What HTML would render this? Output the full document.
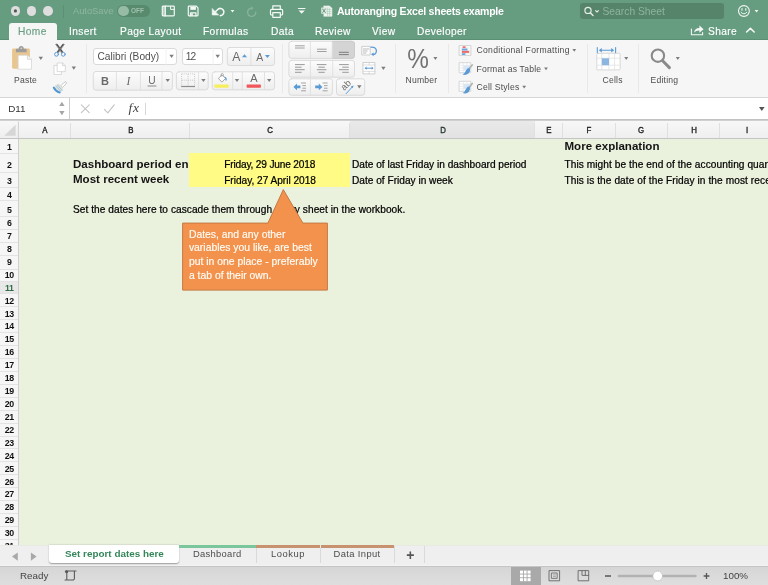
<!DOCTYPE html>
<html lang="en">
<head>
<meta charset="utf-8">
<title>Autoranging Excel sheets example</title>
<style>
*{box-sizing:border-box;margin:0;padding:0}
html,body{width:768px;height:585px;overflow:hidden;background:#eaf1dd}
body{position:relative;will-change:transform;font-family:"Liberation Sans",sans-serif;color:#222;-webkit-font-smoothing:antialiased}
.abs,.t{position:absolute;white-space:nowrap}
.t{line-height:1}
#titlebar{left:0;top:0;width:768px;height:40px;background:#669c80;border-bottom:1px solid #5b8f74}
#ribbon{left:0;top:40px;width:768px;height:57px;background:#f6f6f6}
#fbar{left:0;top:96.5px;width:768px;height:23px;background:#fff;border-top:1px solid #d6d6d6}
#fline{left:0;top:119px;width:768px;height:2px;background:linear-gradient(#bcbcbc,#d6d6d6)}
#colhdr{left:0;top:121px;width:768px;height:17.5px;background:linear-gradient(#f7f7f7,#efefef);border-bottom:1px solid #c4c4c4}
#rowhdr{left:0;top:138.5px;width:19px;height:406.5px;background:#f6f6f6;border-right:1px solid #cfcfcf}
#sheet{left:19px;top:138.5px;width:749px;height:406.5px;background:#eaf1dd}
#tabbar{left:0;top:545px;width:768px;height:21px;background:#efefef;border-top:1px solid #e8eae4;border-bottom:1px solid #f3f3f3}
#status{left:0;top:566px;width:768px;height:19px;background:linear-gradient(#d6d6d6,#dedede);border-top:1px solid #c4c4c4}
.tab{color:#fff;font-size:10.2px;letter-spacing:.38px;top:27.3px;-webkit-text-stroke:.15px #fff}
.rl{font-size:8.6px;letter-spacing:.22px;color:#4c4c4c}
.ch{font-size:8.4px;color:#222;top:126px;-webkit-text-stroke:.35px #222;transform:translateX(-50%) scaleX(.94)}
#rh{position:absolute;left:0;top:0;width:19px;height:545px;overflow:hidden}
.rh{font-size:8.8px;color:#111;left:0;width:18.5px;text-align:center;font-weight:bold;letter-spacing:-.5px}
.rs{position:absolute;left:0;width:18px;height:1px;background:#e3e3e3}
.cs{position:absolute;top:123px;width:1px;height:15px;background:#e0e0e0}
.cell{font-size:10.15px;color:#000;-webkit-text-stroke:.22px #000}
.cb{font-size:11.55px;font-weight:bold;color:#141414}
.co{font-size:10.4px;line-height:13.9px;color:#fffdf6;-webkit-text-stroke:.15px #fffdf6}
.vsep{position:absolute;width:1px;background:#e9e9e9;top:44px;height:49px}
.box{position:absolute;background:#fff;border:1px solid #dadada;border-radius:3px}
.btn{position:absolute;background:linear-gradient(#fbfbfb,#f1f1f1);border:1px solid #d6d6d6;border-radius:3px}
.bsep{position:absolute;width:1px;background:#dedede}
.dd{position:absolute;width:0;height:0;border-left:2.5px solid transparent;border-right:2.5px solid transparent;border-top:3.5px solid #777}
</style>
</head>
<body>
<!-- ===== backgrounds ===== -->
<div class="abs" id="titlebar"></div>
<div class="abs" id="ribbon"></div>
<div class="abs" id="fbar"></div>
<div class="abs" id="fline"></div>
<div class="abs" id="colhdr"></div>
<div class="abs" id="sheet"></div>
<div class="abs" id="rowhdr"></div>
<div class="abs" id="tabbar"></div>
<div class="abs" id="status"></div>

<!-- ===== title bar ===== -->
<div id="tb">
<div class="abs" style="left:10.5px;top:6px;width:9.8px;height:9.8px;border-radius:50%;background:#dedede"></div>
<svg class="abs" style="left:10px;top:5px" width="12" height="12" viewBox="0 0 12 12"><circle cx="5.4" cy="5.9" r="1.6" fill="#4f5853"/></svg>
<div class="abs" style="left:26.6px;top:6px;width:9.8px;height:9.8px;border-radius:50%;background:#dedede"></div>
<div class="abs" style="left:42.8px;top:6px;width:9.8px;height:9.8px;border-radius:50%;background:#dedede"></div>
<div class="abs" style="left:63px;top:5px;width:1px;height:13px;background:#5d8f72"></div>
<div class="t" style="left:73px;top:7px;font-size:9.3px;color:#8fb8a0">AutoSave</div>
<div class="abs" style="left:117px;top:5px;width:33px;height:12px;border-radius:6px;background:#588a6d"></div>
<div class="abs" style="left:118px;top:5.7px;width:10.6px;height:10.6px;border-radius:50%;background:#96bca5"></div>
<div class="t" style="left:131px;top:8px;font-size:6.5px;font-weight:bold;color:#a0c2af">OFF</div>
<div class="t" style="left:337px;top:6.1px;font-size:10.55px;font-weight:bold;color:#fff;letter-spacing:-.25px">Autoranging Excel sheets example</div>
<div class="abs" style="left:580px;top:3px;width:144px;height:16px;border-radius:3px;background:#56846a"></div>
<div class="t" style="left:602.5px;top:7.3px;font-size:10.3px;color:#8fb49f">Search Sheet</div>
</div>

<svg class="abs" style="left:0;top:0" width="768" height="40" viewBox="0 0 768 40" fill="none" stroke="#f4f8f5" stroke-width="1.2" stroke-linejoin="round" stroke-linecap="round">
<!-- template icon -->
<rect x="162.3" y="6.2" width="12" height="9.6" rx=".8"/><rect x="162.3" y="6.2" width="3" height="9.6" fill="#f4f8f5" fill-opacity=".55" stroke="none"/><path d="M165.3 6.2 V15.8"/><path d="M170.6 6.6 V9.4 H174" stroke-width="1"/>
<!-- save icon -->
<path d="M188.3 7 Q188.3 6.2 189.1 6.2 H196.3 L198 7.9 V15 Q198 15.8 197.2 15.8 H189.1 Q188.3 15.8 188.3 15 Z"/>
<rect x="190.3" y="6.6" width="5.6" height="3.2" fill="#f4f8f5" stroke="none"/>
<path d="M190.5 15.8 V12.9 H196 V15.8" /><rect x="191.2" y="13.4" width="1.6" height="2.4" fill="#f4f8f5" stroke="none"/>
<!-- undo -->
<path d="M212.2 8.8 V15 H218.4 Z" fill="#f4f8f5" stroke-width=".6"/><path d="M215.4 11.8 L217.5 9.7 A3.6 3.6 0 1 1 220.4 15.6" stroke-width="1.6"/>
<path d="M230.6 9.9 H234.4 L232.5 12.4 Z" fill="#f4f8f5" stroke="none"/>
<!-- redo faded -->
<g stroke="#88b39b" stroke-width="1.4"><path d="M251.8 8.2 A4.1 4.1 0 1 0 255.8 12.3"/><path d="M251.4 6.2 L253.6 8.2 L251.4 10.2" fill="#86b098" stroke="none"/></g>
<!-- print -->
<path d="M272.8 9.3 V5.8 H280.3 V9.3"/><path d="M272.6 15 H271.5 Q270.5 15 270.5 14 V10.5 Q270.5 9.4 271.6 9.4 H281.5 Q282.6 9.4 282.6 10.5 V14 Q282.6 15 281.6 15 H280.5"/><path d="M272.8 12.6 H280.3 V17.3 H272.8 Z"/>
<!-- customize -->
<path d="M298.4 8.5 H305" stroke-width="1.1"/><path d="M298.6 10.4 H304.8 L301.7 13.8 Z" fill="#f4f8f5" stroke="none"/>
<!-- excel doc icon -->
<path d="M324 5.9 H329.6 L332 8.3 V16.3 H324 Z" fill="#eef4f0" stroke="#dfe9e3" stroke-width=".6"/>
<path d="M325.5 9.5H331M325.5 11.5H331M325.5 13.5H331M327.6 8V15.6M329.6 8V15.6" stroke="#a9c9b7" stroke-width=".6"/>
<rect x="321.2" y="7.6" width="5.6" height="6.2" rx=".6" fill="#dbe8e0" stroke="none"/>
<path d="M322.7 9 L325.3 12.5 M325.3 9 L322.7 12.5" stroke="#6b9c80" stroke-width="1"/>
<!-- search -->
<circle cx="588" cy="10.4" r="3.1" stroke="#e6efe9" stroke-width="1.2"/><path d="M590.3 12.8 L593 15.6" stroke="#e6efe9" stroke-width="1.4"/>
<path d="M595.6 10.6 L597 12 L598.4 10.6" stroke="#e6efe9" stroke-width="1.1"/>
<!-- smiley -->
<circle cx="743.9" cy="11" r="5.4" stroke-width="1.1"/><path d="M741 12.3 Q743.9 15.6 746.8 12.3" stroke-width="1"/>
<path d="M742 8.6 V10.2 M745.8 8.6 V10.2" stroke-width="1.1"/>
<path d="M754.6 9.9 H758.4 L756.5 12.4 Z" fill="#f4f8f5" stroke="none"/>
<!-- share -->
<path d="M691.4 29 V34.8 H702.6 V32.5" stroke-width="1.1"/>
<path d="M694 32.6 Q694.6 28.2 699.4 28 V25.6 L703.6 29.2 L699.4 32.8 V30.4 Q696.4 30.2 694 32.6 Z" fill="#f4f8f5" stroke="none"/>
<!-- chevron -->
<path d="M746.6 32 L750.4 28.4 L754.2 32" stroke-width="1.6"/>
</svg>
<!-- ===== ribbon tabs ===== -->
<div class="abs" style="left:8.7px;top:22.6px;width:48px;height:18px;background:#f6f6f6;border-radius:3px 3px 0 0"></div>
<div class="t tab" style="left:18px;color:#6a9e80;-webkit-text-stroke:.15px #6a9e80">Home</div>
<div class="t tab" style="left:69px">Insert</div>
<div class="t tab" style="left:120px">Page Layout</div>
<div class="t tab" style="left:203px">Formulas</div>
<div class="t tab" style="left:271px">Data</div>
<div class="t tab" style="left:315px">Review</div>
<div class="t tab" style="left:372px">View</div>
<div class="t tab" style="left:417px">Developer</div>
<div class="t tab" style="left:708px">Share</div>

<!-- ===== ribbon ===== -->
<div id="rb">
<div class="t rl" style="left:14px;top:75.5px">Paste</div>
<div class="vsep" style="left:86px"></div>
<div class="box" style="left:93px;top:47.5px;width:84px;height:17.5px"></div>
<div class="t" style="left:97.5px;top:51.6px;font-size:10.2px;color:#505050">Calibri (Body)</div>
<div class="box" style="left:181.5px;top:47.5px;width:41.5px;height:17.5px"></div>
<div class="t" style="left:185.8px;top:51.6px;font-size:10.2px;letter-spacing:-1px;color:#505050">12</div>
<div class="vsep" style="left:281.5px"></div>
<div class="vsep" style="left:395px"></div>
<div class="t" style="left:405.8px;top:45.6px;font-size:27px;color:#727272;transform:scaleX(.9);transform-origin:50% 50%">%</div>
<div class="t rl" style="left:405.5px;top:75.5px">Number</div>
<div class="vsep" style="left:447.5px"></div>
<div class="t rl" style="left:476.5px;top:46.4px;letter-spacing:.31px">Conditional Formatting</div>
<div class="t rl" style="left:476.5px;top:65px">Format as Table</div>
<div class="t rl" style="left:476.5px;top:82.8px">Cell Styles</div>
<div class="vsep" style="left:586.5px"></div>
<div class="t rl" style="left:602.5px;top:75.5px">Cells</div>
<div class="vsep" style="left:637.5px"></div>
<div class="t rl" style="left:650.5px;top:75.5px">Editing</div>
</div>

<svg class="abs" style="left:0;top:40px" width="768" height="81" viewBox="0 40 768 81" fill="none" stroke-linejoin="round" stroke-linecap="round" font-family="Liberation Sans, sans-serif">
<defs>
<linearGradient id="bg" x1="0" y1="0" x2="0" y2="1"><stop offset="0" stop-color="#fcfcfc"/><stop offset="1" stop-color="#eeeeee"/></linearGradient>
</defs>
<g>
<rect x="12.1" y="48.4" width="17.8" height="20.3" rx="1.4" fill="#e8c690"/>
<path d="M15.9 52.2 V49.6 Q15.9 48.8 16.7 48.8 H18.6 Q18.8 46 21.2 46 Q23.6 46 23.8 48.8 H25.8 Q26.6 48.8 26.6 49.6 V52.2 Z" fill="#9c9c9c"/>
<circle cx="21.2" cy="48.2" r=".8" fill="#e8e0c8"/>
<path d="M18.3 55.2 H27.4 L31.5 59.3 V69.2 H18.3 Z" fill="#fff" stroke="#d2d2d2" stroke-width=".7"/>
<path d="M27.4 55.2 V59.3 H31.5" fill="#f0f0f0" stroke="#cfcfcf" stroke-width=".7"/>
</g>
<path d="M38.6 56.8 h4.4 l-2.2 3.2 z" fill="#7d7d7d" stroke="none"/>
<g>
<path d="M56 44.2 L57.2 44 L63 52 L62 52.8 Z M64 44.2 L62.8 44 L57 52 L58 52.8 Z" fill="#4a4a4a" stroke="#4a4a4a" stroke-width=".5"/>
<circle cx="56.5" cy="54.3" r="1.9" stroke="#5b9bd5" stroke-width="1"/>
<circle cx="63.3" cy="54.3" r="1.9" stroke="#5b9bd5" stroke-width="1"/>
</g>
<g stroke="#cdcdcd" stroke-width=".7" fill="#fff">
<path d="M54.3 65.4 H61.4 V74.5 H54.3 Z"/>
<path d="M57.5 63 H62.6 L65.3 65.7 V71.6 H57.5 Z"/>
<path d="M62.6 63 V65.7 H65.3" fill="#f1f1f1"/>
</g>
<path d="M71.6 66.5 h4.4 l-2.2 3.2 z" fill="#7d7d7d" stroke="none"/>
<g>
<path d="M61 85.6 L64.4 82.2 Q65.4 81.3 66.1 82.1 Q66.8 83 65.9 83.9 L62.6 87.4 Z" fill="#fff" stroke="#b2b2b2" stroke-width=".7"/>
<path d="M53.6 87.4 L58.8 83.6 L63.4 89.2 L59.8 92.8 Q55.4 91.6 53.6 87.4 Z" fill="#dfe3d8"/>
<path d="M57.4 84.8 L62.2 90.6 M56 85.8 L60.8 91.6" stroke="#9fc3e6" stroke-width=".9"/>
<path d="M53.7 87.5 Q55.6 91.4 59.8 92.6" stroke="#4f93d2" stroke-width="1.8"/>
</g>
<path d="M169.4 54.7 h4.4 l-2.2 3.2 z" fill="#7d7d7d" stroke="none"/>
<path d="M215.5 54.7 h4.4 l-2.2 3.2 z" fill="#7d7d7d" stroke="none"/>
<path d="M166 48.5V64.5M213 48.5V64.5" stroke="#efefef" stroke-width=".8"/>
<rect x="227.3" y="47.5" width="47.2" height="18.0" rx="2.6" fill="url(#bg)" stroke="#d4d4d4" stroke-width=".8"/><path d="M250.9 48.0V65.0" stroke="#dcdcdc" stroke-width=".8"/>
<text x="236.3" y="60.9" font-size="12.2" fill="#6a6a6a" text-anchor="middle">A</text>
<path d="M242 57.3 h5 l-2.5 -3 z" fill="#5b9bd5"/>
<text x="259.8" y="60.6" font-size="10.4" fill="#6a6a6a" text-anchor="middle">A</text>
<path d="M264.9 55 h5 l-2.5 3 z" fill="#5b9bd5"/>
<rect x="93.3" y="71.5" width="79.1" height="18.7" rx="2.6" fill="url(#bg)" stroke="#d4d4d4" stroke-width=".8"/><path d="M116.4 72.0V89.7" stroke="#dcdcdc" stroke-width=".8"/><path d="M140.4 72.0V89.7" stroke="#dcdcdc" stroke-width=".8"/><path d="M162.0 72.0V89.7" stroke="#dcdcdc" stroke-width=".8"/>
<text x="105" y="85" font-size="11" font-weight="bold" fill="#6a6a6a" text-anchor="middle">B</text>
<text x="128.4" y="85" font-size="11.5" font-style="italic" font-family="Liberation Serif, serif" fill="#6a6a6a" text-anchor="middle">I</text>
<text x="151.9" y="84.2" font-size="10.2" fill="#6a6a6a" text-anchor="middle">U</text>
<path d="M148 86H156" stroke="#8a8a8a" stroke-width="1"/>
<path d="M165.5 78.9 h4.4 l-2.2 3.2 z" fill="#7d7d7d" stroke="none"/>
<rect x="176.4" y="71.8" width="31.8" height="18.0" rx="2.6" fill="url(#bg)" stroke="#d4d4d4" stroke-width=".8"/><path d="M198.6 72.3V89.3" stroke="#dcdcdc" stroke-width=".8"/>
<path d="M181.6 73.9H194.6M181.6 80.2H194.6M181.6 73.9V86M188.1 73.9V86M194.6 73.9V86" stroke="#b5b5b5" stroke-width=".7" stroke-dasharray="1 1.1" stroke-linecap="butt"/>
<path d="M181.2 86.5H195" stroke="#8c8c8c" stroke-width="1.2" stroke-linecap="butt"/>
<path d="M201.2 78.9 h4.4 l-2.2 3.2 z" fill="#7d7d7d" stroke="none"/>
<rect x="212.2" y="71.8" width="62.3" height="18.0" rx="2.6" fill="url(#bg)" stroke="#d4d4d4" stroke-width=".8"/><path d="M232.7 72.3V89.3" stroke="#dcdcdc" stroke-width=".8"/><path d="M242.3 72.3V89.3" stroke="#dcdcdc" stroke-width=".8"/><path d="M264.5 72.3V89.3" stroke="#dcdcdc" stroke-width=".8"/>
<g>
<path d="M218.6 78.2 L222 74.8 L225.6 78.4 L222.2 81.8 Z" fill="#fff" stroke="#8e8e8e" stroke-width=".8"/>
<path d="M221 76.4 Q220.4 73.4 222.4 73.2 Q223.8 73.6 223.2 76" stroke="#8e8e8e" stroke-width=".7"/>
<path d="M224.4 76.4 Q226.8 76.8 226.8 79.6 Q226.6 80.8 225.9 80.8 Q225.2 80.6 225.4 79 Z" fill="#5b9bd5"/>
</g>
<rect x="214.4" y="84.4" width="14.3" height="3.3" rx=".6" fill="#f6ee5c"/>
<path d="M234.8 78.9 h4.4 l-2.2 3.2 z" fill="#7d7d7d" stroke="none"/>
<text x="253.8" y="82.4" font-size="11" fill="#6a6a6a" text-anchor="middle">A</text>
<rect x="246.6" y="84.4" width="14.3" height="3.3" rx=".6" fill="#f0565b"/>
<path d="M267.0 78.9 h4.4 l-2.2 3.2 z" fill="#7d7d7d" stroke="none"/>
<rect x="288.9" y="41.3" width="65.6" height="17.1" rx="2.6" fill="url(#bg)" stroke="#d4d4d4" stroke-width=".8"/><path d="M332.7 41.3 H351.9 Q354.5 41.3 354.5 43.9 V55.8 Q354.5 58.4 351.9 58.4 H332.7 Z" fill="#d4d4d4" stroke="#c2c2c2" stroke-width=".6"/><path d="M310.4 41.8V57.9" stroke="#dcdcdc" stroke-width=".8"/><path d="M332.7 41.8V57.9" stroke="#dcdcdc" stroke-width=".8"/>
<path d="M295 45.8H304.7M295 48H304.7M317 49.2H326.6M317 51.5H326.6" stroke="#a0a0a0" stroke-width="1" stroke-linecap="butt"/>
<path d="M338.9 52.3H348.8M338.9 54.6H348.8" stroke="#7e7e7e" stroke-width="1" stroke-linecap="butt"/>
<rect x="288.9" y="60.4" width="65.6" height="16.8" rx="2.6" fill="url(#bg)" stroke="#d4d4d4" stroke-width=".8"/><path d="M310.4 60.9V76.7" stroke="#dcdcdc" stroke-width=".8"/><path d="M332.7 60.9V76.7" stroke="#dcdcdc" stroke-width=".8"/>
<path d="M295 64.6H304.7M295 67.2H301.6M295 69.7H304.7M295 72.3H301.6" stroke="#9a9a9a" stroke-width="1" stroke-linecap="butt"/>
<path d="M316.8 64.6H326.4M318.4 67.2H324.8M316.8 69.7H326.4M318.4 72.3H324.8" stroke="#9a9a9a" stroke-width="1" stroke-linecap="butt"/>
<path d="M339.1 64.6H348.8M342.2 67.2H348.8M339.1 69.7H348.8M342.2 72.3H348.8" stroke="#9a9a9a" stroke-width="1" stroke-linecap="butt"/>
<rect x="288.9" y="78.8" width="43.5" height="16.5" rx="2.6" fill="url(#bg)" stroke="#d4d4d4" stroke-width=".8"/><path d="M310.4 79.3V94.8" stroke="#dcdcdc" stroke-width=".8"/>
<path d="M293.4 86.9 L297 83.6 V85.6 H300.4 V88.2 H297 V90.2 Z" fill="#5b9bd5"/>
<path d="M301 83H306M302.4 85.6H306M302.4 88.2H306M301 90.8H306" stroke="#9a9a9a" stroke-width=".9" stroke-linecap="butt"/>
<path d="M322.4 86.9 L318.8 83.6 V85.6 H315.2 V88.2 H318.8 V90.2 Z" fill="#5b9bd5"/>
<path d="M322.6 83H327.6M324 85.6H327.6M324 88.2H327.6M322.6 90.8H327.6" stroke="#9a9a9a" stroke-width=".9" stroke-linecap="butt"/>
<rect x="336.5" y="78.8" width="28.2" height="16.5" rx="2.6" fill="url(#bg)" stroke="#d4d4d4" stroke-width=".8"/>
<text x="0" y="0" font-size="9.4" fill="#6a6a6a" text-anchor="middle" transform="translate(347.9 87.2) rotate(-45)">ab</text>
<path d="M346.2 93.6 L352.6 86.6" stroke="#5b9bd5" stroke-width="1"/><path d="M353.6 85.4 L350.8 86.4 L352.6 88.2 Z" fill="#5b9bd5"/>
<path d="M357.1 85.3 h4.4 l-2.2 3.2 z" fill="#7d7d7d" stroke="none"/>
<g><rect x="362.2" y="46.4" width="8" height="8.6" fill="#fff" stroke="#bdbdbd" stroke-width=".7"/>
<path d="M363.4 49H368.8M363.4 51H367.2M363.4 53H366" stroke="#a8a8a8" stroke-width=".8"/>
<path d="M371 47.2 Q376.4 47 376.4 51 Q376.2 54.6 372.6 54.4" stroke="#5b9bd5" stroke-width="1.3"/>
<path d="M371 54.3 L373.6 52.4 V56.2 Z" fill="#5b9bd5"/></g>
<g><rect x="363.3" y="62.5" width="11.6" height="11.4" fill="#fff" stroke="#bdbdbd" stroke-width=".7"/>
<path d="M363.3 65H374.9M363.3 71.4H374.9M369.1 62.5V65M369.1 71.4V73.9" stroke="#c9c9c9" stroke-width=".6"/>
<path d="M365.6 68.2H372.6" stroke="#5b9bd5" stroke-width="1"/>
<path d="M364.6 68.2 L366.6 66.6 V69.8 Z M373.6 68.2 L371.6 66.6 V69.8 Z" fill="#5b9bd5"/></g>
<path d="M381.2 66.8 h4.4 l-2.2 3.2 z" fill="#7d7d7d" stroke="none"/>
<path d="M433.4 57.1 h4.0 l-2.0 3.0 z" fill="#7d7d7d" stroke="none"/>
<g><rect x="459.5" y="45.6" width="11.4" height="9.8" fill="#fff" stroke="#c4c4c4" stroke-width=".7"/>
<path d="M459.5 48.1H470.9M459.5 50.5H470.9M459.5 53H470.9M467 45.6V55.4" stroke="#dedede" stroke-width=".5"/>
<rect x="462.6" y="46.3" width="3" height="1.7" fill="#ef6b6b"/><rect x="461.8" y="48.5" width="5.6" height="2" fill="#6ea6dc"/>
<rect x="461.8" y="50.9" width="7.4" height="2" fill="#ef6b6b"/><rect x="461.8" y="53.2" width="3.6" height="1.8" fill="#6ea6dc"/></g>
<g transform="translate(0 62.7)"><rect x="459.5" y="0" width="11.2" height="10" fill="#fff" stroke="#c9c9c9" stroke-width=".7"/>
<path d="M459.5 2.6H470.7M459.5 5.1H470.7M459.5 7.6H470.7M463.2 0V10M467 0V10" stroke="#dcdcdc" stroke-width=".5"/>
<rect x="463.4" y="2.8" width="7" height="4.6" fill="#d6e6f6"/>
<path d="M472.2 2.2 L469 6.4" stroke="#b3b3b3" stroke-width="1.7"/>
<path d="M469.6 5 Q466.6 5.4 465.8 8 Q465 10.6 462.4 11.8 Q466.8 13 469 10.4 Q470.8 7.8 469.6 5 Z" fill="#5b9bd5"/></g>
<g transform="translate(0 81.3)"><rect x="459.5" y="0" width="11.2" height="10" fill="#fff" stroke="#c9c9c9" stroke-width=".7"/>
<path d="M459.5 2.6H470.7M459.5 5.1H470.7M459.5 7.6H470.7M463.2 0V10M467 0V10" stroke="#dcdcdc" stroke-width=".5"/>
<rect x="463.4" y="2.8" width="7" height="4.6" fill="#d6e6f6"/>
<path d="M472.2 2.2 L469 6.4" stroke="#b3b3b3" stroke-width="1.7"/>
<path d="M469.6 5 Q466.6 5.4 465.8 8 Q465 10.6 462.4 11.8 Q466.8 13 469 10.4 Q470.8 7.8 469.6 5 Z" fill="#5b9bd5"/></g>
<path d="M572.4 48.9 h3.8 l-1.9 2.8 z" fill="#7d7d7d" stroke="none"/>
<path d="M544.1 67.4 h3.8 l-1.9 2.8 z" fill="#7d7d7d" stroke="none"/>
<path d="M522.3 85.8 h3.8 l-1.9 2.8 z" fill="#7d7d7d" stroke="none"/>
<g><rect x="596.8" y="53.3" width="23.3" height="16.6" rx=".8" fill="#fff" stroke="#cfcfcf" stroke-width=".8"/>
<path d="M596.8 58.2H620.1M596.8 65.2H620.1M601.8 53.3V69.9M609 53.3V69.9M614.6 53.3V69.9" stroke="#dedede" stroke-width=".7"/>
<rect x="601.8" y="58.3" width="7.2" height="6.9" fill="#8cb5e2"/>
<path d="M597.3 47.6V52.6M615.6 47.6V52.6" stroke="#5b9bd5" stroke-width="1.1"/>
<path d="M600.6 50.2H612.4" stroke="#5b9bd5" stroke-width="1.1"/>
<path d="M598.8 50.2 L601.8 48 V52.4 Z M614.2 50.2 L611.2 48 V52.4 Z" fill="#5b9bd5"/></g>
<path d="M624.2 56.9 h4.0 l-2.0 3.0 z" fill="#7d7d7d" stroke="none"/>
<circle cx="657.9" cy="55.7" r="6.2" stroke="#8a8a8a" stroke-width="2.1"/><path d="M662.6 60.8 L669.4 67.6" stroke="#8a8a8a" stroke-width="3" />
<path d="M675.8 56.9 h4.0 l-2.0 3.0 z" fill="#7d7d7d" stroke="none"/>
<path d="M59.2 106 h5.4 l-2.7 -4.2 z M59.2 111.1 h5.4 l-2.7 4.2 z" fill="#a6a6a6"/>
<path d="M81.4 104.8 L89.2 112.6 M89.2 104.8 L81.4 112.6" stroke="#c6c6c6" stroke-width="1.2"/>
<path d="M104.4 109.4 L107.8 112.8 L114.2 104.8" stroke="#c6c6c6" stroke-width="1.2"/>
<path d="M759 107 h5.6 l-2.8 4 z" fill="#555" stroke="none"/>
</svg>

<!-- ===== formula bar ===== -->
<div class="t" style="left:8.2px;top:103.5px;font-size:9.9px;color:#333">D11</div>
<div class="abs" style="left:68.6px;top:98px;width:1px;height:21px;background:#cdcdcd"></div>
<div class="abs" style="left:145.4px;top:103px;width:1px;height:12px;background:#d6d6d6"></div>
<div class="t" style="left:128.6px;top:100.7px;font-size:13.5px;letter-spacing:.7px;font-style:italic;font-family:'Liberation Serif',serif;color:#444">fx</div>

<!-- ===== column headers ===== -->
<div class="abs" style="left:349.5px;top:121px;width:185px;height:17px;background:linear-gradient(#e9e9e9,#e2e2e2)"></div>
<svg class="abs" style="left:0;top:121px" width="20" height="18" viewBox="0 121 20 18"><path d="M15.6 124.8 V135.7 H4.2 Z" fill="#d6d6d6"/><path d="M18.4 121.5V138" stroke="#cfcfcf" stroke-width="1"/></svg>
<div id="ch">
<div class="cs" style="left:69.9px"></div><div class="cs" style="left:188.5px"></div><div class="cs" style="left:349.1px"></div><div class="cs" style="left:533.7px"></div><div class="cs" style="left:562.3px"></div><div class="cs" style="left:614.5px"></div><div class="cs" style="left:667.0px"></div><div class="cs" style="left:719.3px"></div>
<div class="t ch" style="left:45.0px">A</div>
<div class="t ch" style="left:130.5px">B</div>
<div class="t ch" style="left:270.0px">C</div>
<div class="t ch" style="left:442.5px;color:#2f5f44">D</div>
<div class="t ch" style="left:548.5px">E</div>
<div class="t ch" style="left:588.8px">F</div>
<div class="t ch" style="left:641.1px">G</div>
<div class="t ch" style="left:694.1px">H</div>
<div class="t ch" style="left:746.8px">I</div>
</div>

<!-- ===== row headers ===== -->
<div id="rh">
<div class="abs" style="left:0;top:281px;width:18px;height:13px;background:#e8e8e8"></div>
<div class="rs" style="top:152.7px"></div><div class="t rh" style="top:143.0px">1</div>
<div class="rs" style="top:171.9px"></div><div class="t rh" style="top:160.9px">2</div>
<div class="rs" style="top:186.8px"></div><div class="t rh" style="top:177.3px">3</div>
<div class="rs" style="top:199.9px"></div><div class="t rh" style="top:190.9px">4</div>
<div class="rs" style="top:215.8px"></div><div class="t rh" style="top:205.8px">5</div>
<div class="rs" style="top:228.8px"></div><div class="t rh" style="top:219.1px">6</div>
<div class="rs" style="top:241.7px"></div><div class="t rh" style="top:232.4px">7</div>
<div class="rs" style="top:254.6px"></div><div class="t rh" style="top:245.3px">8</div>
<div class="rs" style="top:268.9px"></div><div class="t rh" style="top:257.8px">9</div>
<div class="rs" style="top:280.5px"></div><div class="t rh" style="top:270.8px">10</div>
<div class="rs" style="top:293.4px"></div><div class="t rh" style="top:283.7px;color:#2f6b47">11</div>
<div class="rs" style="top:306.3px"></div><div class="t rh" style="top:296.6px">12</div>
<div class="rs" style="top:319.2px"></div><div class="t rh" style="top:309.5px">13</div>
<div class="rs" style="top:332.2px"></div><div class="t rh" style="top:322.4px">14</div>
<div class="rs" style="top:345.1px"></div><div class="t rh" style="top:335.4px">15</div>
<div class="rs" style="top:358.0px"></div><div class="t rh" style="top:348.3px">16</div>
<div class="rs" style="top:370.9px"></div><div class="t rh" style="top:361.2px">17</div>
<div class="rs" style="top:383.8px"></div><div class="t rh" style="top:374.1px">18</div>
<div class="rs" style="top:396.8px"></div><div class="t rh" style="top:387.0px">19</div>
<div class="rs" style="top:409.7px"></div><div class="t rh" style="top:400.0px">20</div>
<div class="rs" style="top:422.6px"></div><div class="t rh" style="top:412.9px">21</div>
<div class="rs" style="top:435.5px"></div><div class="t rh" style="top:425.8px">22</div>
<div class="rs" style="top:448.4px"></div><div class="t rh" style="top:438.7px">23</div>
<div class="rs" style="top:461.4px"></div><div class="t rh" style="top:451.6px">24</div>
<div class="rs" style="top:474.3px"></div><div class="t rh" style="top:464.6px">25</div>
<div class="rs" style="top:487.2px"></div><div class="t rh" style="top:477.5px">26</div>
<div class="rs" style="top:500.1px"></div><div class="t rh" style="top:490.4px">27</div>
<div class="rs" style="top:513.0px"></div><div class="t rh" style="top:503.3px">28</div>
<div class="rs" style="top:526.0px"></div><div class="t rh" style="top:516.2px">29</div>
<div class="rs" style="top:538.9px"></div><div class="t rh" style="top:529.2px">30</div>
<div class="t rh" style="top:542.1px">31</div>
</div>

<!-- ===== sheet content ===== -->
<div class="abs" style="left:189px;top:152.7px;width:160.5px;height:34.7px;background:#fffb84"></div>
<div class="t cb" style="left:73px;top:158.5px">Dashboard period en</div>
<div class="t cb" style="left:73px;top:174px">Most recent week</div>
<div class="t cb" style="left:564.5px;top:140.5px">More explanation</div>
<div class="t cell" style="left:224.2px;letter-spacing:-.17px;top:160px">Friday, 29 June 2018</div>
<div class="t cell" style="left:224.2px;letter-spacing:-.02px;top:175.5px">Friday, 27 April 2018</div>
<div class="t cell" style="left:352px;top:160px">Date of last Friday in dashboard period</div>
<div class="t cell" style="left:352px;top:175.5px">Date of Friday in week</div>
<div class="t cell" style="left:564.5px;top:160px;letter-spacing:.07px">This might be the end of the accounting quarter</div>
<div class="t cell" style="left:564.5px;top:175.5px;letter-spacing:.08px">This is the date of the Friday in the most recent week</div>
<div class="t cell" style="left:73px;top:205px;letter-spacing:.05px">Set the dates here to cascade them through every sheet in the workbook.</div>

<!-- callout -->
<svg class="abs" style="left:170px;top:180px" width="180" height="120" viewBox="170 180 180 120">
<path d="M182.6 223.1 H267.9 L283.3 189.6 L302.9 223.1 H327.4 V290.1 H182.6 Z" fill="#f3924d" stroke="#c47a42" stroke-width="1"/>
</svg>
<div class="t co" style="left:188.9px;top:227.5px">Dates, and any other</div>
<div class="t co" style="left:188.9px;top:241.4px">variables you like, are best</div>
<div class="t co" style="left:188.9px;top:255.3px">put in one place - preferably</div>
<div class="t co" style="left:188.9px;top:269.2px">a tab of their own.</div>

<!-- ===== sheet tabs ===== -->
<div class="abs" style="left:49px;top:545px;width:130px;height:18px;background:#fff;border-radius:0 0 3px 3px;box-shadow:0 0.5px 1.5px rgba(0,0,0,.35)"></div>
<div class="t" style="left:65px;top:548.5px;font-size:9.9px;font-weight:bold;color:#34855a">Set report dates here</div>
<div class="abs" style="left:179px;top:545.2px;width:77px;height:3px;background:#7cc69c"></div>
<div class="abs" style="left:256px;top:545.2px;width:63.5px;height:3px;background:#c9926e"></div>
<div class="abs" style="left:320.5px;top:545.2px;width:73px;height:3px;background:#c9926e"></div>
<div class="abs" style="left:255.5px;top:548px;width:1px;height:14.5px;background:#dadada"></div>
<div class="abs" style="left:319.5px;top:548px;width:1px;height:14.5px;background:#dadada"></div>
<div class="abs" style="left:393.5px;top:546px;width:1px;height:16.5px;background:#dadada"></div>
<div class="abs" style="left:424px;top:546px;width:1px;height:16.5px;background:#dadada"></div>
<div class="t" style="left:193px;top:548.9px;font-size:9.4px;letter-spacing:.3px;color:#4c4c4c">Dashboard</div>
<div class="t" style="left:271px;top:548.9px;font-size:9.4px;letter-spacing:.52px;color:#4c4c4c">Lookup</div>
<div class="t" style="left:333.5px;top:548.9px;font-size:9.4px;letter-spacing:.38px;color:#4c4c4c">Data Input</div>
<div class="t" style="left:406.2px;top:548.4px;font-size:14px;font-weight:bold;color:#555">+</div>

<!-- ===== status bar ===== -->
<div class="abs" style="left:511.2px;top:566.5px;width:29.4px;height:18.5px;background:#a9a9a9"></div>
<svg class="abs" style="left:0;top:545px" width="768" height="40" viewBox="0 545 768 40" fill="none" stroke-linejoin="round" stroke-linecap="round">
<path d="M12 556.6 L17.8 552.4 V560.8 Z M36.6 556.6 L30.9 552.4 V560.8 Z" fill="#a8a8a8"/>
<!-- macro record icon -->
<circle cx="66.6" cy="571.6" r="1.7" fill="#5a5a5a"/>
<path d="M66.8 572 V579.8 M65 580 H73.4 M68.4 571 H76 M74.4 571.2 V578.4 Q74.4 580 72.8 580" stroke="#5a5a5a" stroke-width="1.1"/>
<!-- view buttons -->
<g stroke="#fff" stroke-width=".8"><rect x="520" y="570.6" width="10.6" height="10.6" fill="#fff" stroke="none"/>
<path d="M523.5 570.6V581.2M527.1 570.6V581.2M520 574.1H530.6M520 577.7H530.6" stroke="#a9a9a9" stroke-width=".9"/></g>
<rect x="549.4" y="570.6" width="10.2" height="10.2" stroke="#666" stroke-width=".9"/><rect x="551.8" y="573" width="5.4" height="5.4" stroke="#666" stroke-width=".8"/><path d="M553.4 574.9H555.6M553.4 576.6H555.6" stroke="#888" stroke-width=".6"/>
<rect x="578.5" y="570.6" width="10.2" height="10.2" stroke="#666" stroke-width=".9"/><path d="M582 570.6V575.4H588.7M585.3 570.6V575.4" stroke="#666" stroke-width=".9"/>
<path d="M605 576H611" stroke="#555" stroke-width="1.5" stroke-linecap="butt"/>
<path d="M619 576H695.4" stroke="#b2b2b2" stroke-width="2.6"/>
<circle cx="657.7" cy="576" r="4.9" fill="#fff" stroke="#bdbdbd" stroke-width=".7"/>
<path d="M703.6 576H709.4M706.5 573.1V578.9" stroke="#555" stroke-width="1.3" stroke-linecap="butt"/>
</svg>

<div class="t" style="left:20px;top:571px;font-size:9.8px;color:#444">Ready</div>
<div class="t" style="left:723px;top:571px;font-size:9.8px;color:#444">100%</div>

</body>
</html>
